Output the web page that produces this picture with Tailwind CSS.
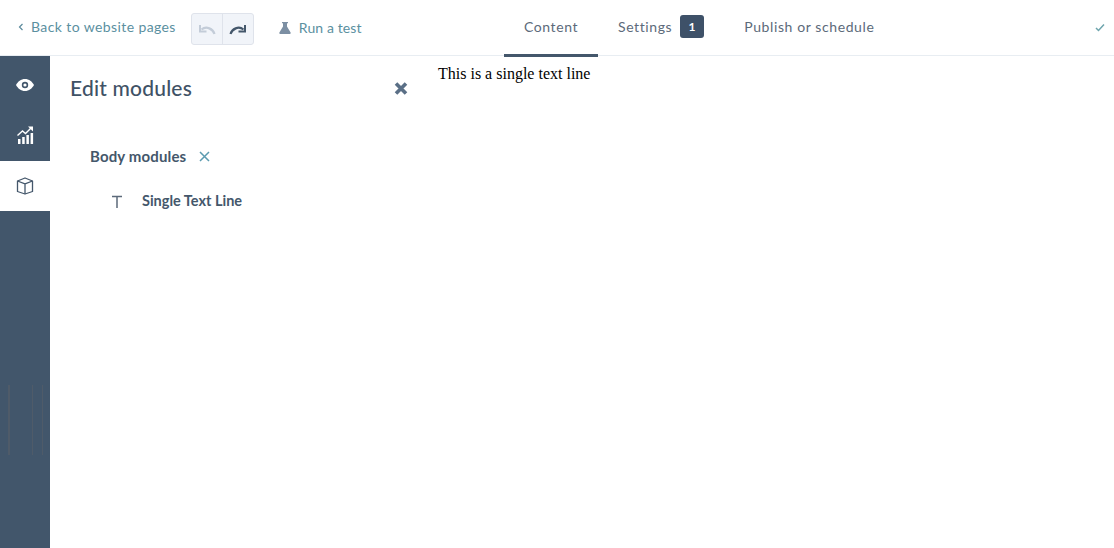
<!DOCTYPE html>
<html lang="en">
<head>
<meta charset="UTF-8" />
<title>Edit modules</title>
<script src="https://cdn.jsdelivr.net/npm/@tailwindcss/browser@4"></script>
</head>
<body class="w-[1114px] h-[548px] overflow-hidden bg-white font-['Lato',sans-serif]">
	<!-- Top bar -->
	<div class="flex items-center h-[56px] border-b border-[#e8edf2] relative">
		<a class="flex items-center ml-[18px] pb-[2px] text-[14px] tracking-[0.4px] text-[#5b909f]">
			<svg class="w-[6px] h-[8px] mr-[7px]" viewBox="0 0 6 8" fill="none" stroke="#5b8a9c" stroke-width="1.2"><path d="M4.5 1 1.500 4l3 3"/></svg>
			Back to website pages
		</a>
		<div class="flex ml-[15px] w-[63px] h-[32px] mt-[2px] rounded-[3px] border border-[#dfe3eb] bg-[#f1f4f9]">
			<div class="flex-1 flex items-center justify-center border-r border-[#dfe3eb]">
				<svg class="w-[18px] h-[13px] mt-[2px]" viewBox="0 0 18 13" fill="none" stroke="#c3ccd8" stroke-width="2.200"><path d="M16.500 11C15 6 8.500 2.500 3.500 6.500"/><path d="M2 2v6.500h6.500" stroke-width="2"/></svg>
			</div>
			<div class="flex-1 flex items-center justify-center">
				<svg class="w-[18px] h-[13px] mt-[2px]" viewBox="0 0 18 13" fill="none" stroke="#44576b" stroke-width="2.200"><path d="M1.500 11C3 6 9.500 2.500 14.500 6.500"/><path d="M16 2v6.500H9.500" stroke-width="2"/></svg>
			</div>
		</div>
		<a class="flex items-center ml-[25px] text-[14px] tracking-[0.1px] text-[#5b909f]">
			<svg class="w-[12px] h-[12px] mr-[8px]" viewBox="0 0 12 12" fill="#7c8fa3"><path d="M3 0h6v1.200H8V4.500l3.600 6c.3.600 0 1.500-.8 1.500H1.200C.4 12 .1 11.100.4 10.500L4 4.500V1.200H3z"/></svg>
			Run a test
		</a>
		<!-- Tabs -->
		<div class="absolute left-[504px] top-0 flex h-[56px] text-[14px] tracking-[0.6px] text-[#5c6a7a]">
			<div class="relative w-[94px] flex items-center justify-center pb-[3px]">
				Content
				<div class="absolute left-0 right-0 bottom-[-1px] h-[3px] bg-[#44576b]"></div>
			</div>
			<div class="flex items-center ml-[20px] pb-[3px]">
				Settings
				<span class="ml-[8px] w-[24px] h-[23px] rounded-[3px] bg-[#3e5168] text-white text-[12px] font-bold flex items-center justify-center">1</span>
			</div>
			<div class="flex items-center ml-[40px] pb-[3px]">Publish or schedule</div>
		</div>
		<svg class="absolute left-[1095px] top-[23px] w-[10px] h-[9px]" viewBox="0 0 10 9" fill="none" stroke="#6ea5ad" stroke-width="1.500"><path d="M1 5l2.500 2.500L9 1.500"/></svg>
	</div>

	<div class="flex h-[492px]">
		<!-- Icon rail -->
		<div class="w-[50px] flex flex-col bg-[#42566b]">
			<div class="h-[52px] flex items-center justify-center pt-[6px]">
				<svg class="w-[18px] h-[12px]" viewBox="0 0 18 12"><path fill="#fff" fill-rule="evenodd" d="M9 0c4 0 7.200 2.600 9 6-1.800 3.400-5 6-9 6S1.800 9.400 0 6c1.800-3.400 5-6 9-6zm0 2.800a3.200 3.200 0 1 0 0 6.400 3.200 3.200 0 0 0 0-6.400z"/><circle cx="9" cy="6" r="1.600" fill="#fff"/></svg>
			</div>
			<div class="h-[53px] flex items-center justify-center">
				<svg class="w-[17px] h-[18px]" viewBox="0 0 17 18" fill="#fff"><path d="M1 18v-5h2.500v5zM5.200 18v-7h2.500v7zM9.400 18V9h2.500v9zM13.600 18V7h2.500v11z"/><path d="M.5 9.500 5.500 5l3 2.500L14 2" fill="none" stroke="#fff" stroke-width="1.400"/><path d="M11 .5h5v5z"/></svg>
			</div>
			<div class="h-[50px] bg-white flex items-center justify-center">
				<svg class="w-[18px] h-[18px] mr-[1px]" viewBox="0 0 18 18" fill="none" stroke="#44576b" stroke-width="1.300" stroke-linejoin="round"><path d="M9 1l7.500 3v10.500L9 17 1.500 14.500V4z"/><path d="M1.500 4 9 6.800 16.500 4M9 6.800V17"/></svg>
			</div>
			<!-- faint streaks in the lower part of the rail -->
			<div class="flex-1 flex items-start pt-[174px] pl-[8px]">
				<div class="w-[2px] h-[70px] bg-[#4f5b69]"></div>
				<div class="w-[1px] h-[70px] ml-[22px] bg-[#4f5b69]"></div>
				<div class="w-[1px] h-[70px] ml-[9px] bg-[#4f5b69]"></div>
			</div>
		</div>
		<!-- Edit modules panel -->
		<div class="w-[370px] relative">
			<h2 class="mt-[18px] ml-[20px] text-[21px] leading-[28px] tracking-[0.2px] font-medium text-[#3f5266]">Edit modules</h2>
			<svg class="absolute left-[344px] top-[26px] w-[14px] h-[13px]" viewBox="0 0 14 13" fill="none" stroke="#5a6f86" stroke-width="3.600"><path d="M2 1.500l10 10M12 1.500l-10 10"/></svg>
			<div class="mt-[44px] ml-[40px] flex items-center h-[20px] text-[15px] tracking-[0.15px] font-bold text-[#44576b]">
				Body modules
				<svg class="ml-[13px] w-[11px] h-[11px]" viewBox="0 0 11 11" fill="none" stroke="#5b9bb0" stroke-width="1.500"><path d="M1 1l9 9M10 1 1 10"/></svg>
			</div>
			<div class="mt-[25px] ml-[61px] flex items-center h-[20px] text-[14.500px] font-bold text-[#44576b]">
				<svg class="w-[12px] h-[13px]" viewBox="0 0 12 13" fill="none" stroke="#5c6a7a" stroke-width="1.500"><path d="M1 1.500h10M6 1.500V13"/></svg>
				<span class="ml-[19px]">Single Text Line</span>
			</div>
		</div>
		<!-- Page preview -->
		<div class="flex-1 pl-[18px] pt-[9px] font-['Liberation_Serif',serif] text-[16px] leading-[18px] text-black">This is a single text line</div>
	</div>
</body>
</html>
